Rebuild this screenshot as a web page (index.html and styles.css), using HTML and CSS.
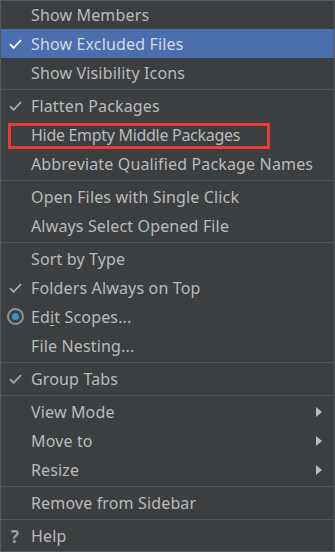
FILE: index.html
```html
<!DOCTYPE html>
<html lang="en">
<head>
    <meta charset="UTF-8">
    <meta name="viewport" content="width=device-width, initial-scale=1.0">
    <title>Project view options</title>
    <link rel="stylesheet" href="styles.css">
</head>
<body>
    <!-- Context menu of the Project tool window -->
    <ul class="menu">
        <li class="item"><span class="icon"></span><span class="label">Show Members</span></li>
        <li class="item selected">
            <span class="icon"><svg class="check" width="13" height="10" viewBox="0 0 13 10"><path d="M1 5.2 L4.6 8.8 L12 1.2"/></svg></span>
            <span class="label">Show Excluded Files</span>
        </li>
        <li class="item"><span class="icon"></span><span class="label">Show Visibility Icons</span></li>
        <li class="sep"></li>
        <li class="item">
            <span class="icon"><svg class="check" width="13" height="10" viewBox="0 0 13 10"><path d="M1 5.2 L4.6 8.8 L12 1.2"/></svg></span>
            <span class="label">Flatten Packages</span>
        </li>
        <li class="item marked"><span class="icon"></span><span class="label">Hide Empty Middle Packages</span></li>
        <li class="item"><span class="icon"></span><span class="label">Abbreviate Qualified Package Names</span></li>
        <li class="sep"></li>
        <li class="item"><span class="icon"></span><span class="label">Open Files with Single Click</span></li>
        <li class="item"><span class="icon"></span><span class="label">Always Select Opened File</span></li>
        <li class="sep"></li>
        <li class="item"><span class="icon"></span><span class="label">Sort by Type</span></li>
        <li class="item">
            <span class="icon"><svg class="check" width="13" height="10" viewBox="0 0 13 10"><path d="M1 5.2 L4.6 8.8 L12 1.2"/></svg></span>
            <span class="label">Folders Always on Top</span>
        </li>
        <li class="item">
            <span class="icon"><span class="radio"></span></span>
            <span class="label">Ed<u>i</u>t Scopes...</span>
        </li>
        <li class="item"><span class="icon"></span><span class="label">File Nesting...</span></li>
        <li class="sep"></li>
        <li class="item">
            <span class="icon"><svg class="check" width="13" height="10" viewBox="0 0 13 10"><path d="M1 5.2 L4.6 8.8 L12 1.2"/></svg></span>
            <span class="label">Group Tabs</span>
        </li>
        <li class="sep"></li>
        <li class="item"><span class="icon"></span><span class="label">View Mode</span><span class="arrow"></span></li>
        <li class="item"><span class="icon"></span><span class="label">Move to</span><span class="arrow"></span></li>
        <li class="item"><span class="icon"></span><span class="label">Resize</span><span class="arrow"></span></li>
        <li class="sep"></li>
        <li class="item"><span class="icon"></span><span class="label">Remove from Sidebar</span></li>
        <li class="sep"></li>
        <li class="item last"><span class="icon help">?</span><span class="label">Help</span></li>
    </ul>
</body>
</html>
```

FILE: styles.css
```css
/* Общие стили */
body {
    margin: 0;
    background: #3c3f41;
    font-family: 'Noto Sans', 'Open Sans', sans-serif;
}

.menu {
    list-style: none;
    margin: 0;
    padding: 0;
    width: 335px;
    height: 552px;
    box-sizing: border-box;
    background: #3c3f41;
    border: 1px solid #555759;
    overflow: hidden;
}

.item {
    position: relative;
    display: flex;
    align-items: center;
    height: 29px;
    padding-left: 5px;
    font-size: 16px;
    letter-spacing: 0.15px;
    color: #bbbbbb;
}

.item:first-child {
    height: 28px;
}

.item.last {
    height: 30px;
}

.item.selected {
    background: #4b6eaf;
    color: #d4d9e2;
}

.icon {
    display: flex;
    align-items: center;
    justify-content: center;
    width: 18px;
    height: 18px;
    margin-right: 7px;
    flex-shrink: 0;
}

.check path {
    fill: none;
    stroke: #a9abad;
    stroke-width: 1.8;
}

.selected .check path {
    stroke: #ffffff;
}

.radio {
    width: 17px;
    height: 17px;
    box-sizing: border-box;
    border: 2px solid #8f9294;
    border-radius: 50%;
    display: flex;
    align-items: center;
    justify-content: center;
}

.radio::after {
    content: '';
    width: 7px;
    height: 7px;
    border-radius: 50%;
    background: #3a94c0;
}

.help {
    font-size: 17px;
    font-weight: bold;
    color: #9a9c9e;
}

.label {
    white-space: nowrap;
}

.label u {
    text-underline-offset: 2px;
}

.arrow {
    margin-left: auto;
    margin-right: 12px;
    width: 0;
    height: 0;
    border-left: 6px solid #bbbbbb;
    border-top: 5px solid transparent;
    border-bottom: 5px solid transparent;
}

/* Красная рамка-пометка поверх пункта */
.marked .label {
    letter-spacing: -0.3px;
}

.marked::after {
    content: '';
    position: absolute;
    left: 7px;
    top: 3px;
    width: 262px;
    height: 26px;
    box-sizing: border-box;
    border: 3px solid #f03a3a;
}

.sep {
    height: 4px;
    box-sizing: border-box;
    padding-top: 2px;
}

.sep::before {
    content: '';
    display: block;
    height: 1px;
    background: #515355;
}
```
